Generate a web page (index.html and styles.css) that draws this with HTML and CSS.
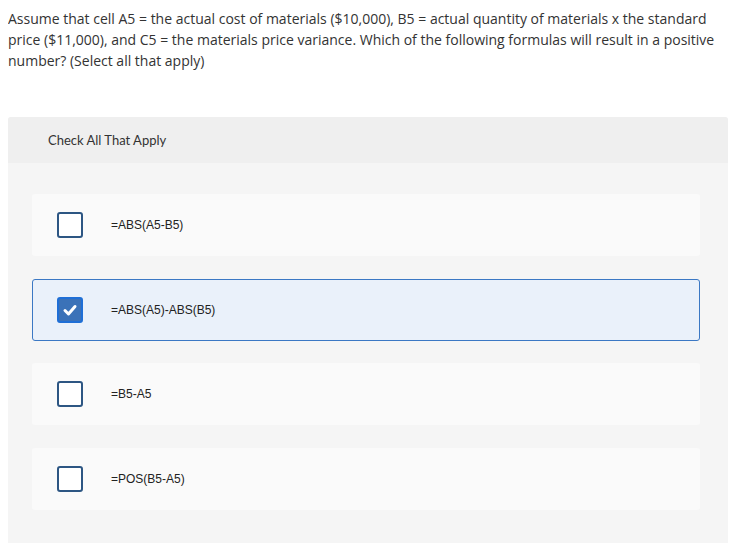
FILE: index.html
```html
<!DOCTYPE html>
<html>
<head>
<meta charset="utf-8">
<link rel="stylesheet" href="styles.css">
</head>
<body>
<p class="question">Assume that cell A5 = the actual cost of materials ($10,000), B5 = actual quantity of materials x the standard price ($11,000), and C5 = the materials price variance. Which of the following formulas will result in a positive number? (Select all that apply)</p>
<div class="panel">
  <div class="panel-head">Check All That Apply</div>
  <div class="panel-body">
    <div class="option">
      <span class="box"></span>
      <span class="label">=ABS(A5-B5)</span>
    </div>
    <div class="option selected">
      <span class="box checked"><svg width="16" height="14" viewBox="0 0 16 14"><path d="M3 7.5 L6.5 11 L13 3.5" fill="none" stroke="#fff" stroke-width="3" stroke-linecap="round" stroke-linejoin="round"/></svg></span>
      <span class="label">=ABS(A5)-ABS(B5)</span>
    </div>
    <div class="option">
      <span class="box"></span>
      <span class="label">=B5-A5</span>
    </div>
    <div class="option">
      <span class="box"></span>
      <span class="label">=POS(B5-A5)</span>
    </div>
  </div>
</div>
</body>
</html>
```
FILE: styles.css
```css
body {
  margin: 8px;
  font-family: Lato, "Open Sans", sans-serif;
  color: #333;
  background: #fff;
}
.question {
  margin: 0;
  font-family: "Open Sans", Lato, sans-serif;
  font-size: 14px;
  line-height: 21px;
  color: #333;
  width: 712px;
}
.panel {
  margin-top: 46px;
  width: 720px;
  background: #f5f5f5;
  border-radius: 3px 3px 0 0;
  height: 426px;
}
.panel-head {
  height: 46px;
  background: #efefef;
  display: flex;
  align-items: center;
  padding-left: 40px;
  font-size: 13px;
  color: #333;
  border-radius: 3px 3px 0 0;
}
.panel-body {
  padding: 31px 28px 0 24px;
  display: flex;
  flex-direction: column;
  gap: 22.7px;
}
.option {
  height: 62px;
  box-sizing: border-box;
  background: #fafafa;
  border-radius: 3px;
  display: flex;
  align-items: center;
  padding-left: 24px;
  border: 1px solid transparent;
}
.option.selected {
  background: #eaf1fa;
  border-color: #3b78c4;
}
.box {
  width: 26px;
  height: 26px;
  box-sizing: border-box;
  border: 2px solid #2d5683;
  border-radius: 3px;
  background: #fff;
  display: flex;
  align-items: center;
  justify-content: center;
  flex: none;
}
.box.checked {
  background: #3b72b8;
  border-color: #1f6fd6;
}
.label {
  margin-left: 28px;
  font-family: "Liberation Sans", Arial, sans-serif;
  font-size: 12px;
  color: #222;
}
```
